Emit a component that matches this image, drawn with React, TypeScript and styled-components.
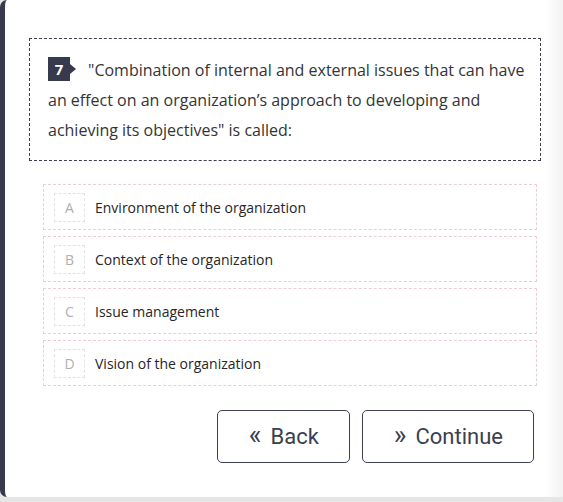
import { FC } from "react";
import styled, { createGlobalStyle } from "styled-components";

const GlobalStyle = createGlobalStyle`
body {
  margin: 0;
  background: #e6e6e6;
  font-family: "Open Sans", "Noto Sans", sans-serif;
}
`;

const Card = styled.div`
box-sizing: border-box;
width: 563px;
height: 497px;
background: linear-gradient(to right, #ffffff 540px, #efefef 563px);
border-left: 5px solid #363a4c;
border-radius: 7px 0 0 7px;
padding: 38px 0 0 24px;
`;

const QuestionBox = styled.div`
box-sizing: border-box;
width: 512px;
border: 1px dashed #3c3f4f;
padding: 16px 10px 15px 18px;
font-size: 16px;
line-height: 30px;
color: #343434;
`;

const Badge = styled.span`
position: relative;
display: inline-block;
width: 22px;
height: 24px;
margin-right: 18px;
background: #363a4c;
color: #fff;
font-weight: 700;
font-size: 15px;
line-height: 24px;
text-align: center;
vertical-align: 1px;

&::after {
  content: "";
  position: absolute;
  right: -6px;
  top: 7px;
  border-top: 5px solid transparent;
  border-bottom: 5px solid transparent;
  border-left: 6px solid #363a4c;
}
`;

const OptionList = styled.div`
display: flex;
flex-direction: column;
gap: 6px;
width: 494px;
margin: 23px 0 0 14px;
`;

const Option = styled.div`
box-sizing: border-box;
display: flex;
align-items: center;
gap: 10px;
height: 46px;
padding: 0 10px;
border: 1px dashed #ecccd8;
cursor: pointer;
`;

const Letter = styled.span`
box-sizing: border-box;
display: flex;
align-items: center;
justify-content: center;
width: 31px;
height: 29px;
border: 1px dashed #e2e2e2;
color: #b0b0b0;
font-size: 14px;
`;

const OptionText = styled.span`
font-size: 14px;
color: #262626;
`;

const Actions = styled.div`
display: flex;
justify-content: flex-end;
gap: 12px;
width: 505px;
margin-top: 24px;
`;

const NavButton = styled.button`
box-sizing: border-box;
display: flex;
align-items: center;
height: 53px;
padding: 0 30px 0 31px;
background: #fff;
border: 1px solid #3c3f4f;
border-radius: 5px;
color: #3c3f4f;
font-family: Roboto, "Liberation Sans", sans-serif;
font-size: 22px;
cursor: pointer;
`;

const Arrow = styled.span`
font-size: 27px;
line-height: 1;
margin-right: 9px;
position: relative;
top: -1px;
`;

const options = [
  { key: "A", text: "Environment of the organization" },
  { key: "B", text: "Context of the organization" },
  { key: "C", text: "Issue management" },
  { key: "D", text: "Vision of the organization" },
];

const App: FC = () => {
  return (
    <>
      <GlobalStyle />
      <Card>
        <QuestionBox>
          <Badge>7</Badge>
          "Combination of internal and external issues that can have an effect on an
          organization’s approach to developing and achieving its objectives" is called:
        </QuestionBox>
        <OptionList>
          {options.map((o) => (
            <Option key={o.key}>
              <Letter>{o.key}</Letter>
              <OptionText>{o.text}</OptionText>
            </Option>
          ))}
        </OptionList>
        <Actions>
          <NavButton>
            <Arrow>«</Arrow>Back
          </NavButton>
          <NavButton>
            <Arrow>»</Arrow>Continue
          </NavButton>
        </Actions>
      </Card>
    </>
  );
};

export default App;
